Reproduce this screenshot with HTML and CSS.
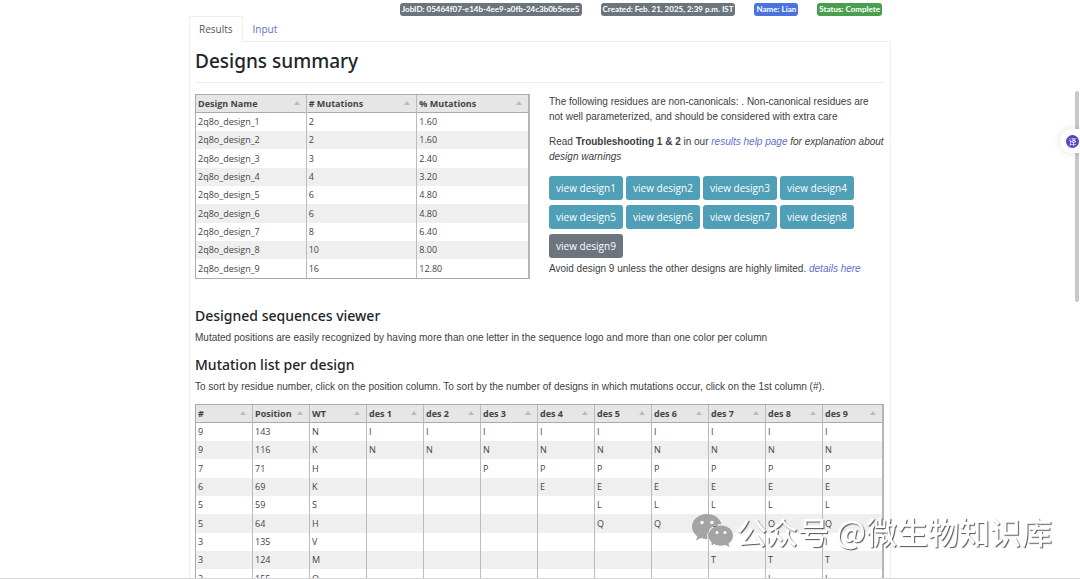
FILE: index.html
```html
<!DOCTYPE html>
<html lang="en">
<head>
    <meta charset="UTF-8">
    <meta name="viewport" content="width=device-width, initial-scale=1.0">
    <title>Designs summary</title>
    <link rel="stylesheet" href="styles.css">
</head>
<body>
    <main class="container">
        <div class="badges">
            <span class="badge">JobID: 05464f07-e14b-4ee9-a0fb-24c3b0b5eee5</span>
            <span class="badge">Created: Feb. 21, 2025, 2:39 p.m. IST</span>
            <span class="badge badge-primary">Name: Lian</span>
            <span class="badge badge-success">Status: Complete</span>
        </div>

        <nav class="tabs">
            <a href="#results" class="tab active">Results</a>
            <a href="#input" class="tab">Input</a>
        </nav>

        <div class="tab-content" id="results">
            <h2>Designs summary</h2>
            <hr>

            <div class="summary">
                <table class="grid-table summary-table">
                    <thead>
                        <tr><th>Design Name</th><th># Mutations</th><th>% Mutations</th></tr>
                    </thead>
                    <tbody>
                        <tr><td>2q8o_design_1</td><td>2</td><td>1.60</td></tr>
                        <tr><td>2q8o_design_2</td><td>2</td><td>1.60</td></tr>
                        <tr><td>2q8o_design_3</td><td>3</td><td>2.40</td></tr>
                        <tr><td>2q8o_design_4</td><td>4</td><td>3.20</td></tr>
                        <tr><td>2q8o_design_5</td><td>6</td><td>4.80</td></tr>
                        <tr><td>2q8o_design_6</td><td>6</td><td>4.80</td></tr>
                        <tr><td>2q8o_design_7</td><td>8</td><td>6.40</td></tr>
                        <tr><td>2q8o_design_8</td><td>10</td><td>8.00</td></tr>
                        <tr><td>2q8o_design_9</td><td>16</td><td>12.80</td></tr>
                    </tbody>
                </table>

                <div class="notes">
                    <p>The following residues are non-canonicals: . Non-canonical residues are<br>not well parameterized, and should be considered with extra care</p>
                    <p>Read <b>Troubleshooting 1 &amp; 2</b> in our <i><a href="#help">results help page</a> for explanation about<br>design warnings</i></p>
                    <div class="buttons">
                        <button type="button">view design1</button>
                        <button type="button">view design2</button>
                        <button type="button">view design3</button>
                        <button type="button">view design4</button>
                        <button type="button">view design5</button>
                        <button type="button">view design6</button>
                        <button type="button">view design7</button>
                        <button type="button">view design8</button>
                        <button type="button" class="secondary">view design9</button>
                    </div>
                    <p>Avoid design 9 unless the other designs are highly limited. <i><a href="#details">details here</a></i></p>
                </div>
            </div>

            <h4>Designed sequences viewer</h4>
            <p>Mutated positions are easily recognized by having more than one letter in the sequence logo and more than one color per column</p>

            <h4>Mutation list per design</h4>
            <p>To sort by residue number, click on the position column. To sort by the number of designs in which mutations occur, click on the 1st column (#).</p>

            <table class="grid-table mutation-table">
                <colgroup>
                    <col span="11">
                    <col class="last">
                </colgroup>
                <thead>
                    <tr><th>#</th><th>Position</th><th>WT</th><th>des 1</th><th>des 2</th><th>des 3</th><th>des 4</th><th>des 5</th><th>des 6</th><th>des 7</th><th>des 8</th><th>des 9</th></tr>
                </thead>
                <tbody>
                    <tr><td>9</td><td>143</td><td>N</td><td>I</td><td>I</td><td>I</td><td>I</td><td>I</td><td>I</td><td>I</td><td>I</td><td>I</td></tr>
                    <tr><td>9</td><td>116</td><td>K</td><td>N</td><td>N</td><td>N</td><td>N</td><td>N</td><td>N</td><td>N</td><td>N</td><td>N</td></tr>
                    <tr><td>7</td><td>71</td><td>H</td><td></td><td></td><td>P</td><td>P</td><td>P</td><td>P</td><td>P</td><td>P</td><td>P</td></tr>
                    <tr><td>6</td><td>69</td><td>K</td><td></td><td></td><td></td><td>E</td><td>E</td><td>E</td><td>E</td><td>E</td><td>E</td></tr>
                    <tr><td>5</td><td>59</td><td>S</td><td></td><td></td><td></td><td></td><td>L</td><td>L</td><td>L</td><td>L</td><td>L</td></tr>
                    <tr><td>5</td><td>64</td><td>H</td><td></td><td></td><td></td><td></td><td>Q</td><td>Q</td><td>Q</td><td>Q</td><td>Q</td></tr>
                    <tr><td>3</td><td>135</td><td>V</td><td></td><td></td><td></td><td></td><td></td><td></td><td>I</td><td>I</td><td>I</td></tr>
                    <tr><td>3</td><td>124</td><td>M</td><td></td><td></td><td></td><td></td><td></td><td></td><td>T</td><td>T</td><td>T</td></tr>
                    <tr><td>2</td><td>155</td><td>Q</td><td></td><td></td><td></td><td></td><td></td><td></td><td></td><td>L</td><td>L</td></tr>
                </tbody>
            </table>
        </div>
    </main>

    <div class="scrollbar"></div>
    <button type="button" class="translate" aria-label="Translate"><span>译</span></button>

    <div class="watermark">
        <svg width="42" height="34" viewBox="0 0 42 34">
            <path fill="#a4a4a4" d="M15 0C6.500 0 0 5.600 0 12.600c0 4 2 7.400 5.300 9.800L4 26.500l5-2.500c2 .7 4 1 6.500 1C14 16.500 20 10 29.500 10 28 4 22 0 15 0z"/>
            <path fill="#a4a4a4" d="M41 21.500C41 15.800 35.500 11.500 29 11.500s-12.500 4.300-12.500 10S22 31.700 29 31.700c1.500 0 3-.2 4.500-.6l4 2.200-1-3.700c2.800-2 4.500-4.800 4.500-8.100z"/>
            <g fill="#fff">
                <circle cx="10" cy="8.500" r="1.700"/>
                <circle cx="20" cy="8.500" r="1.700"/>
                <circle cx="25" cy="18.500" r="1.500"/>
                <circle cx="33" cy="18.500" r="1.500"/>
            </g>
        </svg>
        <span>公众号 @微生物知识库</span>
    </div>
</body>
</html>
```
FILE: styles.css
```css
* {
    box-sizing: border-box;
}
body {
    margin: 0;
    height: 100vh;
    overflow: hidden;
    border-bottom: 1px solid #d5d5d5;
    font-family: "Liberation Sans", Arial, sans-serif;
    font-size: 10px;
    line-height: 15px;
    color: #3c4043;
    background-color: #fff;
}
.container {
    max-width: 702px;
    margin: 0 auto;
}
a {
    color: #6070c8;
    text-decoration: none;
}
p {
    margin: 0 0 10px;
}
.badges {
    display: flex;
    justify-content: flex-end;
    gap: 19px;
    padding: 3px 9px 0 0;
}
.badge {
    padding: 0 2px;
    border-radius: 3px;
    font-family: Lato, sans-serif;
    font-size: 8px;
    font-weight: 700;
    line-height: 13px;
    color: #fff;
    background-color: #6c757d;
}
.badge-primary {
    background-color: #4a73e0;
}
.badge-success {
    background-color: #4a9f4f;
}
.tabs {
    display: flex;
    border-bottom: 1px solid #eee;
    font-family: "Open Sans", sans-serif;
}
.tab {
    margin-bottom: -1px;
    padding: 5px 9px 4px;
    border: 1px solid transparent;
}
.tab.active {
    color: #555;
    border-color: #eee #eee #fff;
    background-color: #fff;
}
.tab-content {
    padding: 6px 6px 0 5px;
    border: 1px solid #eee;
    border-top: none;
}
h2, h4 {
    margin: 0;
    font-family: "Noto Sans", sans-serif;
    font-weight: 500;
    color: #212529;
}
h2 {
    font-size: 19px;
    line-height: 26px;
}
h4 {
    margin-bottom: 5px;
    font-size: 14px;
    line-height: 19px;
}
hr {
    margin: 8px 0 11px;
    border: none;
    border-top: 1px solid #eee;
}
.summary {
    display: flex;
    align-items: flex-start;
    gap: 19px;
    margin-bottom: 20px;
}
.summary-table {
    flex: 0 0 335px;
    width: 335px;
}
.notes {
    flex: 1;
}
.buttons {
    display: flex;
    flex-wrap: wrap;
    gap: 5px 3px;
    padding-top: 2px;
    margin-bottom: 3px;
}
.buttons button {
    width: 74px;
    height: 24px;
    padding: 0;
    border: none;
    border-radius: 3px;
    font: 10px "Open Sans", sans-serif;
    color: #fff;
    background-color: #4f9fb6;
    cursor: pointer;
}
.buttons .secondary {
    background-color: #6c757d;
}
.grid-table {
    table-layout: fixed;
    border-collapse: separate;
    border-spacing: 0;
    border: 1px solid #aaa;
    border-right: 2px solid #b5b5b5;
    font-family: "Open Sans", sans-serif;
    font-size: 9px;
    line-height: 16px;
    color: #444;
}
.grid-table th,
.grid-table td {
    height: 18px;
    padding: 0 2px;
    text-align: left;
    border-right: 1px solid #bbb;
}
.grid-table th:last-child,
.grid-table td:last-child {
    border-right: none;
}
.grid-table th {
    border-bottom: 1px solid #aaa;
    background-color: #e6e6e6;
}
/* sort arrow */
.grid-table th::after {
    content: "";
    float: right;
    margin: 5px 4px 0 0;
    border: 3px solid transparent;
    border-top: none;
    border-bottom: 4px solid #bbb;
}
.grid-table tbody tr:nth-child(even) {
    background-color: #efefef;
}
.grid-table tbody tr:nth-child(3n) td {
    height: 19px;
}
.mutation-table {
    width: 100%;
}
.mutation-table col {
    width: 57px;
}
.mutation-table .last {
    width: auto;
}
.scrollbar {
    position: fixed;
    top: 91px;
    right: 1px;
    width: 4px;
    height: 211px;
    border-radius: 2px;
    background-color: #c8c8c8;
}
.translate {
    position: fixed;
    top: 129px;
    right: 0;
    width: 20px;
    height: 24px;
    padding: 0 0 0 6px;
    border: none;
    border-radius: 12px 0 0 12px;
    background-color: #fff;
    box-shadow: 0 0 8px rgba(0,0,0,0.12);
}
.translate span {
    display: block;
    width: 13px;
    height: 13px;
    border-radius: 50%;
    font: 8px/13px "Noto Sans CJK SC", sans-serif;
    color: #fff;
    background-color: #5546bd;
}
.watermark {
    position: fixed;
    right: 28px;
    bottom: 26px;
    display: flex;
    align-items: center;
    gap: 2px;
    font: 500 31px/44px "Noto Sans CJK SC", sans-serif;
    color: #fff;
    text-shadow: 1px 1px 1px #555;
}
```
